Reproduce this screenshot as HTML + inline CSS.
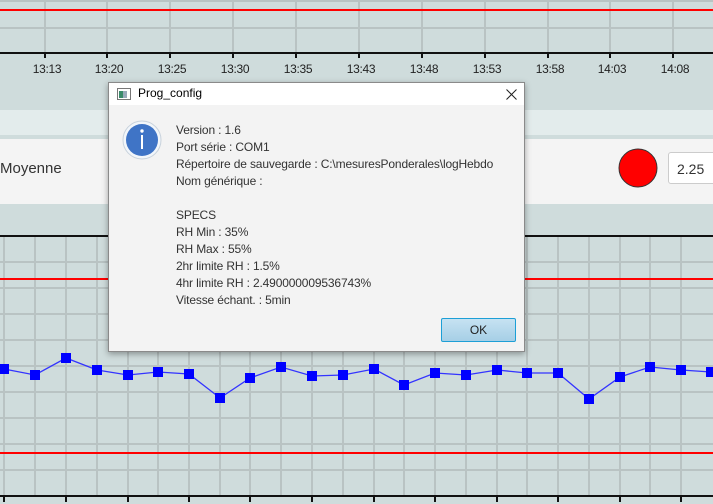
<!DOCTYPE html>
<html><head><meta charset="utf-8"><style>
body{margin:0;width:713px;height:504px;overflow:hidden;background:#cfdcdc;font-family:"Liberation Sans",sans-serif;position:relative}
.a{position:absolute}
.lbl{position:absolute;top:62px;font-size:12px;color:#222;width:40px;text-align:center;margin-left:-20px;letter-spacing:-0.3px}
.dlg{position:absolute;left:108px;top:82px;width:417px;height:270px;background:#f3f3f3;border:1px solid #8a8a8a;box-shadow:0 2px 6px rgba(0,0,0,.35);box-sizing:border-box}
.tb{height:22px;background:#fff;position:relative}
.txt{position:absolute;left:67px;top:39px;font-size:12px;line-height:17px;color:#333;letter-spacing:-0.15px}
</style></head><body>
<svg class="a" style="left:0;top:0" width="713" height="504">
<g stroke="#b9c3c3" stroke-width="2">
<line x1="0" y1="1" x2="713" y2="1"/><line x1="0" y1="28" x2="713" y2="28"/>
<line x1="45" y1="0" x2="45" y2="53"/><line x1="107" y1="0" x2="107" y2="53"/><line x1="170" y1="0" x2="170" y2="53"/><line x1="233" y1="0" x2="233" y2="53"/><line x1="296" y1="0" x2="296" y2="53"/><line x1="359" y1="0" x2="359" y2="53"/><line x1="422" y1="0" x2="422" y2="53"/><line x1="485" y1="0" x2="485" y2="53"/><line x1="548" y1="0" x2="548" y2="53"/><line x1="610" y1="0" x2="610" y2="53"/><line x1="673" y1="0" x2="673" y2="53"/>
</g>
<line x1="0" y1="10" x2="713" y2="10" stroke="#f00" stroke-width="2"/>
<line x1="0" y1="53" x2="713" y2="53" stroke="#111" stroke-width="2"/>
<g stroke="#111" stroke-width="2"><line x1="45" y1="53" x2="45" y2="58"/><line x1="107" y1="53" x2="107" y2="58"/><line x1="170" y1="53" x2="170" y2="58"/><line x1="233" y1="53" x2="233" y2="58"/><line x1="296" y1="53" x2="296" y2="58"/><line x1="359" y1="53" x2="359" y2="58"/><line x1="422" y1="53" x2="422" y2="58"/><line x1="485" y1="53" x2="485" y2="58"/><line x1="548" y1="53" x2="548" y2="58"/><line x1="610" y1="53" x2="610" y2="58"/><line x1="673" y1="53" x2="673" y2="58"/></g>
<rect x="0" y="110" width="713" height="25" fill="#e3ecec"/>
<rect x="0" y="139" width="713" height="65" fill="#f4f4f4"/>
<g stroke="#b9c3c3" stroke-width="2">
<line x1="0" y1="262" x2="713" y2="262"/><line x1="0" y1="288" x2="713" y2="288"/><line x1="0" y1="314" x2="713" y2="314"/><line x1="0" y1="340" x2="713" y2="340"/><line x1="0" y1="366" x2="713" y2="366"/><line x1="0" y1="392" x2="713" y2="392"/><line x1="0" y1="418" x2="713" y2="418"/><line x1="0" y1="444" x2="713" y2="444"/><line x1="0" y1="470" x2="713" y2="470"/>
<line x1="4" y1="237" x2="4" y2="496"/><line x1="35" y1="237" x2="35" y2="496"/><line x1="66" y1="237" x2="66" y2="496"/><line x1="97" y1="237" x2="97" y2="496"/><line x1="128" y1="237" x2="128" y2="496"/><line x1="158" y1="237" x2="158" y2="496"/><line x1="189" y1="237" x2="189" y2="496"/><line x1="220" y1="237" x2="220" y2="496"/><line x1="250" y1="237" x2="250" y2="496"/><line x1="281" y1="237" x2="281" y2="496"/><line x1="312" y1="237" x2="312" y2="496"/><line x1="343" y1="237" x2="343" y2="496"/><line x1="374" y1="237" x2="374" y2="496"/><line x1="404" y1="237" x2="404" y2="496"/><line x1="435" y1="237" x2="435" y2="496"/><line x1="466" y1="237" x2="466" y2="496"/><line x1="497" y1="237" x2="497" y2="496"/><line x1="527" y1="237" x2="527" y2="496"/><line x1="558" y1="237" x2="558" y2="496"/><line x1="589" y1="237" x2="589" y2="496"/><line x1="620" y1="237" x2="620" y2="496"/><line x1="650" y1="237" x2="650" y2="496"/><line x1="681" y1="237" x2="681" y2="496"/>
</g>
<line x1="0" y1="236" x2="713" y2="236" stroke="#111" stroke-width="2"/>
<line x1="0" y1="279" x2="713" y2="279" stroke="#f00" stroke-width="2"/>
<line x1="0" y1="453" x2="713" y2="453" stroke="#f00" stroke-width="2"/>
<line x1="0" y1="496" x2="713" y2="496" stroke="#111" stroke-width="2"/>
<g stroke="#111" stroke-width="2"><line x1="4" y1="496" x2="4" y2="502"/><line x1="66" y1="496" x2="66" y2="502"/><line x1="128" y1="496" x2="128" y2="502"/><line x1="189" y1="496" x2="189" y2="502"/><line x1="250" y1="496" x2="250" y2="502"/><line x1="312" y1="496" x2="312" y2="502"/><line x1="374" y1="496" x2="374" y2="502"/><line x1="435" y1="496" x2="435" y2="502"/><line x1="497" y1="496" x2="497" y2="502"/><line x1="558" y1="496" x2="558" y2="502"/><line x1="620" y1="496" x2="620" y2="502"/><line x1="681" y1="496" x2="681" y2="502"/></g>
<polyline fill="none" stroke="#3333ff" stroke-width="1.3" points="4,369 35,375 66,358 97,370 128,375 158,372 189,374 220,398 250,378 281,367 312,376 343,375 374,369 404,385 435,373 466,375 497,370 527,373 558,373 589,399 620,377 650,367 681,370 711,372"/>
<g fill="#0000ff">
<rect x="-1" y="364" width="10" height="10"/><rect x="30" y="370" width="10" height="10"/><rect x="61" y="353" width="10" height="10"/><rect x="92" y="365" width="10" height="10"/><rect x="123" y="370" width="10" height="10"/><rect x="153" y="367" width="10" height="10"/><rect x="184" y="369" width="10" height="10"/><rect x="215" y="393" width="10" height="10"/><rect x="245" y="373" width="10" height="10"/><rect x="276" y="362" width="10" height="10"/><rect x="307" y="371" width="10" height="10"/><rect x="338" y="370" width="10" height="10"/><rect x="369" y="364" width="10" height="10"/><rect x="399" y="380" width="10" height="10"/><rect x="430" y="368" width="10" height="10"/><rect x="461" y="370" width="10" height="10"/><rect x="492" y="365" width="10" height="10"/><rect x="522" y="368" width="10" height="10"/><rect x="553" y="368" width="10" height="10"/><rect x="584" y="394" width="10" height="10"/><rect x="615" y="372" width="10" height="10"/><rect x="645" y="362" width="10" height="10"/><rect x="676" y="365" width="10" height="10"/><rect x="706" y="367" width="10" height="10"/>
</g>
<circle cx="638" cy="168" r="19" fill="#f00" stroke="#333" stroke-width="1"/>
</svg>
<div class="lbl" style="left:47px">13:13</div><div class="lbl" style="left:109px">13:20</div><div class="lbl" style="left:172px">13:25</div><div class="lbl" style="left:235px">13:30</div><div class="lbl" style="left:298px">13:35</div><div class="lbl" style="left:361px">13:43</div><div class="lbl" style="left:424px">13:48</div><div class="lbl" style="left:487px">13:53</div><div class="lbl" style="left:550px">13:58</div><div class="lbl" style="left:612px">14:03</div><div class="lbl" style="left:675px">14:08</div>
<div class="a" style="left:0;top:160px;font-size:15px;color:#333">Moyenne</div>
<div class="a" style="left:668px;top:152px;width:50px;height:32px;background:#fff;border:1px solid #ccc;border-radius:3px;font-size:14px;line-height:32px;padding-left:8px;color:#333;box-sizing:border-box">2.25</div>
<div class="dlg">
<div class="tb">
<svg class="a" style="left:8px;top:5px" width="14" height="12"><rect x="0.5" y="0.5" width="13" height="11" fill="#fff" stroke="#777"/><rect x="2" y="3" width="4" height="7" fill="#3a8a6a"/><rect x="6" y="3" width="4" height="7" fill="#9ab"/></svg>
<div class="a" style="left:29px;top:3px;font-size:12px;color:#000">Prog_config</div>
<svg class="a" style="left:397px;top:6px" width="11" height="11"><path d="M0.5 0.5L10.5 10.5M10.5 0.5L0.5 10.5" stroke="#222" stroke-width="1"/></svg>
</div>
<svg class="a" style="left:13px;top:37px" width="40" height="40"><circle cx="20" cy="20" r="19" fill="#f2f6fa" stroke="#c8d2dc"/><circle cx="20" cy="20" r="16" fill="#3f74c6"/><circle cx="20" cy="11" r="1.7" fill="#fff"/><rect x="19" y="15" width="2" height="14" fill="#fff"/></svg>
<div class="txt">Version : 1.6<br>Port série : COM1<br>Répertoire de sauvegarde : C:\mesuresPonderales\logHebdo<br>Nom générique :<br><br>SPECS<br>RH Min : 35%<br>RH Max : 55%<br>2hr limite RH : 1.5%<br>4hr limite RH : 2.490000009536743%<br>Vitesse échant. : 5min</div>
<div class="a" style="left:332px;top:235px;width:75px;height:24px;border:1px solid #1c9fd6;border-radius:2px;background:linear-gradient(#c6e2f2,#a6cfe6);box-sizing:border-box;text-align:center;font-size:12px;line-height:22px;color:#222">OK</div>
</div>
</body></html>
